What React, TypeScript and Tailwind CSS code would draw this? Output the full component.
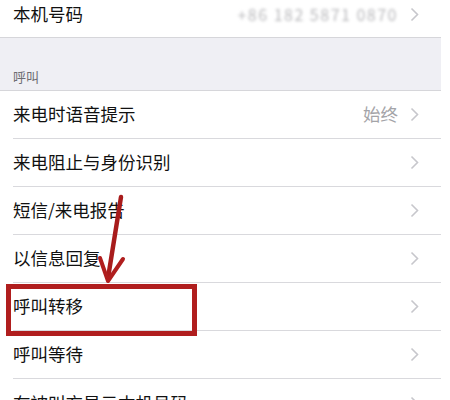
const font = { fontFamily: '"Noto Sans CJK SC", "Noto Sans", sans-serif' };

function Chevron() {
  return (
    <svg width="9" height="15" viewBox="0 0 9 15" fill="none" className="ml-[12px] shrink-0">
      <path d="M1.5 1.5L7.5 7.5L1.5 13.5" stroke="#c7c7cc" strokeWidth="1.6" />
    </svg>
  );
}

function Row({ label, value, last }: { label: string; value?: string; last?: boolean }) {
  return (
    <div className="pl-[13px] bg-white">
      <div
        className={
          "flex items-center h-[48px] pr-[22px] " +
          (last ? "" : "border-b border-[#d9d9dd]")
        }
      >
        <span className="flex-1 text-[17.5px] text-[#111]">{label}</span>
        {value && <span className="text-[17.5px] text-[#a4a4a8]">{value}</span>}
        <Chevron />
      </div>
    </div>
  );
}

export default function App() {
  return (
    <div className="relative w-[450px] h-[400px] overflow-hidden bg-white" style={font}>
      <div className="w-[441px] -mt-[9px]">
        <div className="flex items-center h-[47px] pl-[13px] pr-[22px] border-b border-[#d6d6da] bg-white">
          <span className="flex-1 text-[17.5px] text-[#111]">本机号码</span>
          <span className="text-[16px] tracking-[1.5px] text-[#b8b8bb] blur-[1.4px]">+86 182 5871 0870</span>
          <Chevron />
        </div>
        <div className="h-[53px] bg-[#efeff4] flex items-end pl-[13px] pb-[4px] border-b border-[#d6d6da]">
          <span className="text-[13px] text-[#6d6d72]">呼叫</span>
        </div>
        <Row label="来电时语音提示" value="始终" />
        <Row label="来电阻止与身份识别" />
        <Row label="短信/来电报告" />
        <Row label="以信息回复" />
        <div className="relative">
          <Row label="呼叫转移" />
          <div className="absolute left-[6px] top-[1px] w-[191px] h-[52px] border-[5px] border-[#b01e1e]" />
        </div>
        <Row label="呼叫等待" />
        <Row label="在被叫方显示本机号码" last />
      </div>
      <svg className="absolute left-0 top-0 pointer-events-none" width="450" height="400">
        <path d="M121 197L108 278" stroke="#a81c1c" strokeWidth="4.5" strokeLinecap="round" />
        <path d="M100 258L108 281L123 259" stroke="#b01e1e" strokeWidth="4" strokeLinecap="round" strokeLinejoin="round" fill="none" />
      </svg>
    </div>
  );
}
